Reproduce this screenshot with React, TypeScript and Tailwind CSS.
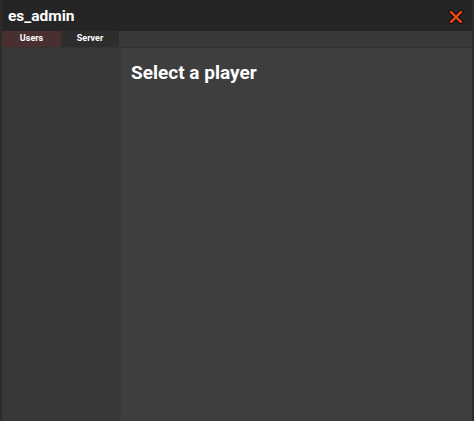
import React, { useState } from 'react';

export default function App() {
  const [tab, setTab] = useState<'users' | 'server'>('users');

  return (
    <div className="w-[474px] h-[421px] bg-[#2c2c2a] flex font-['Roboto',sans-serif] overflow-hidden">
      <div className="ml-[2px] mr-[2px] flex-1 flex flex-col bg-[#3c3c3c]">
        {/* header */}
        <div className="h-[31px] bg-[#252525] flex items-center justify-between pl-[6px] pr-[8px] pt-[2px]">
          <span className="text-white font-bold text-[15.5px] leading-none">es_admin</span>
          <svg width="16" height="16" viewBox="0 0 16 16">
            <path d="M3 3 L13 13 M13 3 L3 13" stroke="#1a0a05" strokeWidth="4.5" strokeLinecap="round" />
            <path d="M3 3 L13 13 M13 3 L3 13" stroke="#f04a1c" strokeWidth="2.4" strokeLinecap="round" />
          </svg>
        </div>
        {/* tabs */}
        <div className="h-[17px] bg-[#393939] flex border-b border-[#333]">
          <button
            onClick={() => setTab('users')}
            className={`w-[59px] text-white text-[9px] font-bold ${tab === 'users' ? 'bg-[#4a2f31]' : 'bg-[#2d2d2d]'}`}
          >
            Users
          </button>
          <button
            onClick={() => setTab('server')}
            className={`w-[58px] text-white text-[9px] font-bold ${tab === 'server' ? 'bg-[#4a2f31]' : 'bg-[#2d2d2d]'}`}
          >
            Server
          </button>
        </div>
        {/* body */}
        <div className="flex-1 flex">
          <div className="w-[119px] bg-[#383838]" />
          <div className="flex-1 bg-[#3e3e3e] px-[10px] pt-[15px]">
            <h1 className="text-white font-bold text-[19px] leading-none">Select a player</h1>
          </div>
        </div>
      </div>
    </div>
  );
}
